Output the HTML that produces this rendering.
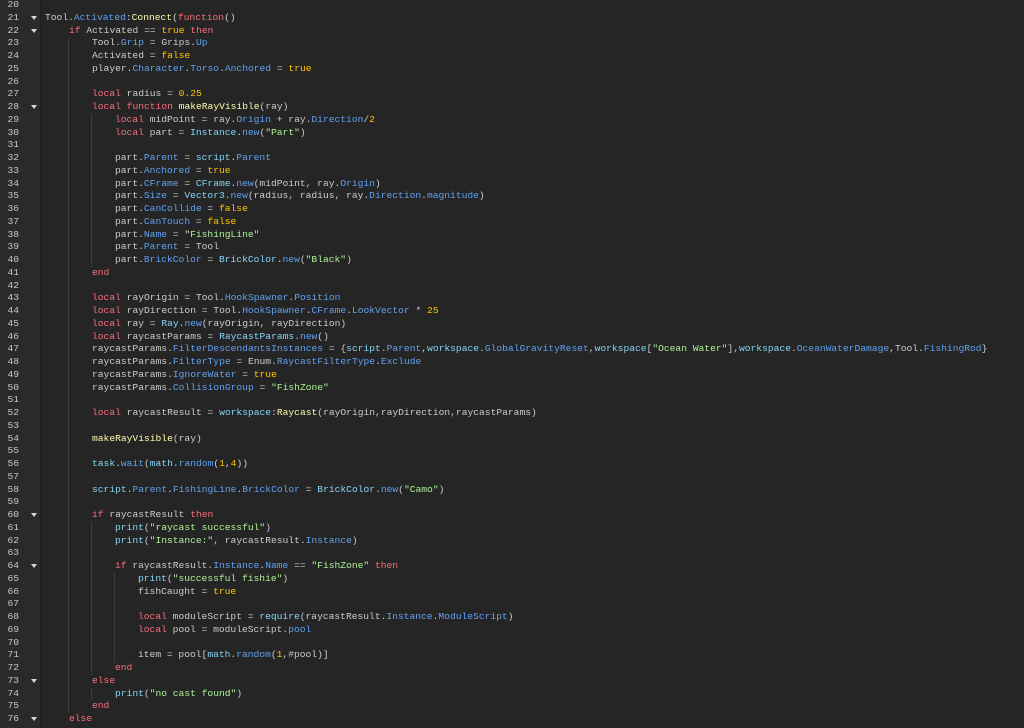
<!DOCTYPE html>
<html><head><meta charset="utf-8"><style>
html,body{margin:0;padding:0;background:#252525;width:1024px;height:728px;overflow:hidden}
#w{position:absolute;left:0;top:-1px;width:1024px;font-family:"Liberation Mono",monospace;font-size:9.65px;color:#cccccc}
#gut{position:absolute;left:0;top:0;width:40px;height:728px;background:#2a2a2a;border-right:1px solid #1f1f1f}
.l{position:relative;height:12.75px;line-height:12.75px}
.l i{position:absolute;left:0;width:19px;text-align:right;font-style:normal;color:#c8c8c8}
.l u{position:absolute;left:31px;top:4px;width:0;height:0;border-left:3.5px solid transparent;border-right:3.5px solid transparent;border-top:4px solid #d8d8d8}
.c{position:absolute;left:45px;top:0;white-space:pre}
.g0,.g{display:inline-block;width:24px;height:12.75px;vertical-align:top}
.g{box-shadow:inset 1px 0 0 #3c3c3c;margin-left:-1px;width:24px}
.k{color:#f86d7c}.b{color:#84d6f7}.p{color:#61a1f1}.s{color:#adf195}.n{color:#ffc600}.f{color:#fdfbac}
</style></head><body>
<div id="gut"></div>
<div id="w">
<div class="l"><i>20</i></div>
<div class="l"><i>21</i><u></u><span class="c">Tool.<span class="p">Activated</span>:<span class="f">Connect</span>(<span class="k">function</span>()</span></div>
<div class="l"><i>22</i><u></u><span class="c"><span class="g0"></span><span class="k">if</span> Activated == <span class="n">true</span> <span class="k">then</span></span></div>
<div class="l"><i>23</i><span class="c"><span class="g0"></span><span class="g"></span>Tool.<span class="p">Grip</span> = Grips.<span class="p">Up</span></span></div>
<div class="l"><i>24</i><span class="c"><span class="g0"></span><span class="g"></span>Activated = <span class="n">false</span></span></div>
<div class="l"><i>25</i><span class="c"><span class="g0"></span><span class="g"></span>player.<span class="p">Character</span>.<span class="p">Torso</span>.<span class="p">Anchored</span> = <span class="n">true</span></span></div>
<div class="l"><i>26</i><span class="c"><span class="g0"></span><span class="g"></span></span></div>
<div class="l"><i>27</i><span class="c"><span class="g0"></span><span class="g"></span><span class="k">local</span> radius = <span class="n">0.25</span></span></div>
<div class="l"><i>28</i><u></u><span class="c"><span class="g0"></span><span class="g"></span><span class="k">local</span> <span class="k">function</span> <span class="f">makeRayVisible</span>(ray)</span></div>
<div class="l"><i>29</i><span class="c"><span class="g0"></span><span class="g"></span><span class="g"></span><span class="k">local</span> midPoint = ray.<span class="p">Origin</span> + ray.<span class="p">Direction</span>/<span class="n">2</span></span></div>
<div class="l"><i>30</i><span class="c"><span class="g0"></span><span class="g"></span><span class="g"></span><span class="k">local</span> part = <span class="b">Instance</span>.<span class="p">new</span>(<span class="s">"Part"</span>)</span></div>
<div class="l"><i>31</i><span class="c"><span class="g0"></span><span class="g"></span><span class="g"></span></span></div>
<div class="l"><i>32</i><span class="c"><span class="g0"></span><span class="g"></span><span class="g"></span>part.<span class="p">Parent</span> = <span class="b">script</span>.<span class="p">Parent</span></span></div>
<div class="l"><i>33</i><span class="c"><span class="g0"></span><span class="g"></span><span class="g"></span>part.<span class="p">Anchored</span> = <span class="n">true</span></span></div>
<div class="l"><i>34</i><span class="c"><span class="g0"></span><span class="g"></span><span class="g"></span>part.<span class="p">CFrame</span> = <span class="b">CFrame</span>.<span class="p">new</span>(midPoint, ray.<span class="p">Origin</span>)</span></div>
<div class="l"><i>35</i><span class="c"><span class="g0"></span><span class="g"></span><span class="g"></span>part.<span class="p">Size</span> = <span class="b">Vector3</span>.<span class="p">new</span>(radius, radius, ray.<span class="p">Direction</span>.<span class="p">magnitude</span>)</span></div>
<div class="l"><i>36</i><span class="c"><span class="g0"></span><span class="g"></span><span class="g"></span>part.<span class="p">CanCollide</span> = <span class="n">false</span></span></div>
<div class="l"><i>37</i><span class="c"><span class="g0"></span><span class="g"></span><span class="g"></span>part.<span class="p">CanTouch</span> = <span class="n">false</span></span></div>
<div class="l"><i>38</i><span class="c"><span class="g0"></span><span class="g"></span><span class="g"></span>part.<span class="p">Name</span> = <span class="s">"FishingLine"</span></span></div>
<div class="l"><i>39</i><span class="c"><span class="g0"></span><span class="g"></span><span class="g"></span>part.<span class="p">Parent</span> = Tool</span></div>
<div class="l"><i>40</i><span class="c"><span class="g0"></span><span class="g"></span><span class="g"></span>part.<span class="p">BrickColor</span> = <span class="b">BrickColor</span>.<span class="p">new</span>(<span class="s">"Black"</span>)</span></div>
<div class="l"><i>41</i><span class="c"><span class="g0"></span><span class="g"></span><span class="k">end</span></span></div>
<div class="l"><i>42</i><span class="c"><span class="g0"></span><span class="g"></span></span></div>
<div class="l"><i>43</i><span class="c"><span class="g0"></span><span class="g"></span><span class="k">local</span> rayOrigin = Tool.<span class="p">HookSpawner</span>.<span class="p">Position</span></span></div>
<div class="l"><i>44</i><span class="c"><span class="g0"></span><span class="g"></span><span class="k">local</span> rayDirection = Tool.<span class="p">HookSpawner</span>.<span class="p">CFrame</span>.<span class="p">LookVector</span> * <span class="n">25</span></span></div>
<div class="l"><i>45</i><span class="c"><span class="g0"></span><span class="g"></span><span class="k">local</span> ray = <span class="b">Ray</span>.<span class="p">new</span>(rayOrigin, rayDirection)</span></div>
<div class="l"><i>46</i><span class="c"><span class="g0"></span><span class="g"></span><span class="k">local</span> raycastParams = <span class="b">RaycastParams</span>.<span class="p">new</span>()</span></div>
<div class="l"><i>47</i><span class="c"><span class="g0"></span><span class="g"></span>raycastParams.<span class="p">FilterDescendantsInstances</span> = {<span class="b">script</span>.<span class="p">Parent</span>,<span class="b">workspace</span>.<span class="p">GlobalGravityReset</span>,<span class="b">workspace</span>[<span class="s">"Ocean Water"</span>],<span class="b">workspace</span>.<span class="p">OceanWaterDamage</span>,Tool.<span class="p">FishingRod</span>}</span></div>
<div class="l"><i>48</i><span class="c"><span class="g0"></span><span class="g"></span>raycastParams.<span class="p">FilterType</span> = Enum.<span class="p">RaycastFilterType</span>.<span class="p">Exclude</span></span></div>
<div class="l"><i>49</i><span class="c"><span class="g0"></span><span class="g"></span>raycastParams.<span class="p">IgnoreWater</span> = <span class="n">true</span></span></div>
<div class="l"><i>50</i><span class="c"><span class="g0"></span><span class="g"></span>raycastParams.<span class="p">CollisionGroup</span> = <span class="s">"FishZone"</span></span></div>
<div class="l"><i>51</i><span class="c"><span class="g0"></span><span class="g"></span></span></div>
<div class="l"><i>52</i><span class="c"><span class="g0"></span><span class="g"></span><span class="k">local</span> raycastResult = <span class="b">workspace</span>:<span class="f">Raycast</span>(rayOrigin,rayDirection,raycastParams)</span></div>
<div class="l"><i>53</i><span class="c"><span class="g0"></span><span class="g"></span></span></div>
<div class="l"><i>54</i><span class="c"><span class="g0"></span><span class="g"></span><span class="f">makeRayVisible</span>(ray)</span></div>
<div class="l"><i>55</i><span class="c"><span class="g0"></span><span class="g"></span></span></div>
<div class="l"><i>56</i><span class="c"><span class="g0"></span><span class="g"></span><span class="b">task</span>.<span class="p">wait</span>(<span class="b">math</span>.<span class="p">random</span>(<span class="n">1</span>,<span class="n">4</span>))</span></div>
<div class="l"><i>57</i><span class="c"><span class="g0"></span><span class="g"></span></span></div>
<div class="l"><i>58</i><span class="c"><span class="g0"></span><span class="g"></span><span class="b">script</span>.<span class="p">Parent</span>.<span class="p">FishingLine</span>.<span class="p">BrickColor</span> = <span class="b">BrickColor</span>.<span class="p">new</span>(<span class="s">"Camo"</span>)</span></div>
<div class="l"><i>59</i><span class="c"><span class="g0"></span><span class="g"></span></span></div>
<div class="l"><i>60</i><u></u><span class="c"><span class="g0"></span><span class="g"></span><span class="k">if</span> raycastResult <span class="k">then</span></span></div>
<div class="l"><i>61</i><span class="c"><span class="g0"></span><span class="g"></span><span class="g"></span><span class="b">print</span>(<span class="s">"raycast successful"</span>)</span></div>
<div class="l"><i>62</i><span class="c"><span class="g0"></span><span class="g"></span><span class="g"></span><span class="b">print</span>(<span class="s">"Instance:"</span>, raycastResult.<span class="p">Instance</span>)</span></div>
<div class="l"><i>63</i><span class="c"><span class="g0"></span><span class="g"></span><span class="g"></span></span></div>
<div class="l"><i>64</i><u></u><span class="c"><span class="g0"></span><span class="g"></span><span class="g"></span><span class="k">if</span> raycastResult.<span class="p">Instance</span>.<span class="p">Name</span> == <span class="s">"FishZone"</span> <span class="k">then</span></span></div>
<div class="l"><i>65</i><span class="c"><span class="g0"></span><span class="g"></span><span class="g"></span><span class="g"></span><span class="b">print</span>(<span class="s">"successful fishie"</span>)</span></div>
<div class="l"><i>66</i><span class="c"><span class="g0"></span><span class="g"></span><span class="g"></span><span class="g"></span>fishCaught = <span class="n">true</span></span></div>
<div class="l"><i>67</i><span class="c"><span class="g0"></span><span class="g"></span><span class="g"></span><span class="g"></span></span></div>
<div class="l"><i>68</i><span class="c"><span class="g0"></span><span class="g"></span><span class="g"></span><span class="g"></span><span class="k">local</span> moduleScript = <span class="b">require</span>(raycastResult.<span class="p">Instance</span>.<span class="p">ModuleScript</span>)</span></div>
<div class="l"><i>69</i><span class="c"><span class="g0"></span><span class="g"></span><span class="g"></span><span class="g"></span><span class="k">local</span> pool = moduleScript.<span class="p">pool</span></span></div>
<div class="l"><i>70</i><span class="c"><span class="g0"></span><span class="g"></span><span class="g"></span><span class="g"></span></span></div>
<div class="l"><i>71</i><span class="c"><span class="g0"></span><span class="g"></span><span class="g"></span><span class="g"></span>item = pool[<span class="b">math</span>.<span class="p">random</span>(<span class="n">1</span>,#pool)]</span></div>
<div class="l"><i>72</i><span class="c"><span class="g0"></span><span class="g"></span><span class="g"></span><span class="k">end</span></span></div>
<div class="l"><i>73</i><u></u><span class="c"><span class="g0"></span><span class="g"></span><span class="k">else</span></span></div>
<div class="l"><i>74</i><span class="c"><span class="g0"></span><span class="g"></span><span class="g"></span><span class="b">print</span>(<span class="s">"no cast found"</span>)</span></div>
<div class="l"><i>75</i><span class="c"><span class="g0"></span><span class="g"></span><span class="k">end</span></span></div>
<div class="l"><i>76</i><u></u><span class="c"><span class="g0"></span><span class="k">else</span></span></div>
</div>
</body></html>
